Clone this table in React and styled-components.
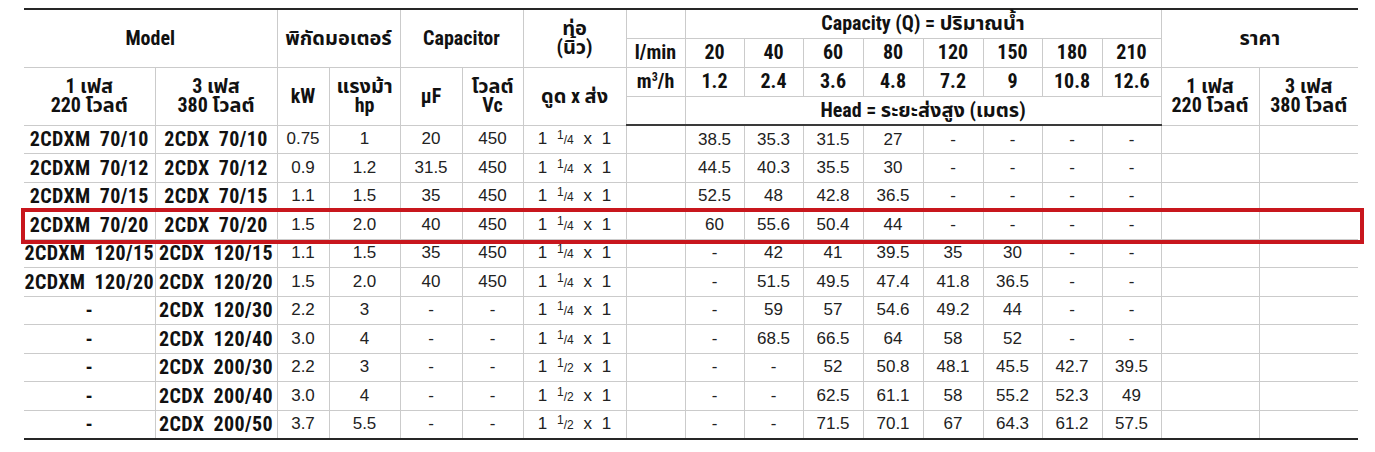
import React from "react"
import styled, { createGlobalStyle } from "styled-components"

const CONDENSED = `"Roboto", "Noto Sans Thai", sans-serif`
const SANS = `"Liberation Sans", Arial, "Noto Sans Thai", sans-serif`
const GRID = "#cbcbcb"

const GlobalStyle = createGlobalStyle`
  body {
    margin: 0;
    background: #fff;
    font-family: ${SANS};
  }
`

const Wrapper = styled.div`
  position: relative;
  padding: 8px 0 0 24px;
`

const Table = styled.table`
  width: 1334px;
  table-layout: fixed;
  border-collapse: collapse;
  color: #1a1a1a;
`

const Col = styled.col`
  width: ${({ $w }) => $w}px;
`

const HeadRow = styled.tr`
  height: 29px;
  &:first-child th {
    border-top: 2px solid #262626;
  }
  &:last-child th {
    border-bottom: 2px solid #3a3a3a;
  }
`

const Th = styled.th`
  font-family: ${CONDENSED};
  font-stretch: 75%;
  font-weight: 700;
  font-size: 20px;
  line-height: 19px;
  color: #111;
  text-align: center;
  white-space: nowrap;
  padding: 0;
  border: 1px solid ${GRID};
  border-left: ${({ $edgeLeft }) => ($edgeLeft ? "none" : `1px solid ${GRID}`)};
  border-right: ${({ $edgeRight }) => ($edgeRight ? "none" : `1px solid ${GRID}`)};
`

const Line = styled.span`
  display: block;
`

const Sup = styled.sup`
  font-size: 12px;
  vertical-align: 7px;
  line-height: 0;
`

const Row = styled.tr`
  height: 28.5px;
  &:last-child td {
    border-bottom: 2px solid #262626;
  }
`

const Td = styled.td`
  font-family: ${SANS};
  font-size: 17px;
  color: #222;
  text-align: center;
  white-space: nowrap;
  padding: 0;
  border: 1px solid ${GRID};
  &:first-child {
    border-left: none;
  }
  &:last-child {
    border-right: none;
  }
`

const ModelCell = styled(Td)`
  font-family: ${CONDENSED};
  font-stretch: 75%;
  font-weight: 700;
  font-size: 20px;
  letter-spacing: 0.4px;
  word-spacing: 4px;
  color: #111;
`

const Pipe = styled.span`
  word-spacing: 5px;
`

const Frac = styled.span`
  font-size: 12px;
  word-spacing: 0;
  sup {
    font-size: 12px;
    vertical-align: 5px;
    line-height: 0;
  }
`

const Highlight = styled.div`
  position: absolute;
  left: 21px;
  top: 208px;
  width: 1343px;
  height: 36px;
  box-sizing: border-box;
  border: 4px solid #c8161d;
  pointer-events: none;
`

const widths = [131, 122, 52, 71, 62, 61, 103, 59, 59, 59, 60, 60, 60, 59, 60, 59, 98, 99]

const rows = [
  ["2CDXM 70/10", "2CDX 70/10", "0.75", "1", "20", "450", "4", ["38.5", "35.3", "31.5", "27", "-", "-", "-", "-"]],
  ["2CDXM 70/12", "2CDX 70/12", "0.9", "1.2", "31.5", "450", "4", ["44.5", "40.3", "35.5", "30", "-", "-", "-", "-"]],
  ["2CDXM 70/15", "2CDX 70/15", "1.1", "1.5", "35", "450", "4", ["52.5", "48", "42.8", "36.5", "-", "-", "-", "-"]],
  ["2CDXM 70/20", "2CDX 70/20", "1.5", "2.0", "40", "450", "4", ["60", "55.6", "50.4", "44", "-", "-", "-", "-"]],
  ["2CDXM 120/15", "2CDX 120/15", "1.1", "1.5", "35", "450", "4", ["-", "42", "41", "39.5", "35", "30", "-", "-"]],
  ["2CDXM 120/20", "2CDX 120/20", "1.5", "2.0", "40", "450", "4", ["-", "51.5", "49.5", "47.4", "41.8", "36.5", "-", "-"]],
  ["-", "2CDX 120/30", "2.2", "3", "-", "-", "4", ["-", "59", "57", "54.6", "49.2", "44", "-", "-"]],
  ["-", "2CDX 120/40", "3.0", "4", "-", "-", "4", ["-", "68.5", "66.5", "64", "58", "52", "-", "-"]],
  ["-", "2CDX 200/30", "2.2", "3", "-", "-", "2", ["-", "-", "52", "50.8", "48.1", "45.5", "42.7", "39.5"]],
  ["-", "2CDX 200/40", "3.0", "4", "-", "-", "2", ["-", "-", "62.5", "61.1", "58", "55.2", "52.3", "49"]],
  ["-", "2CDX 200/50", "3.7", "5.5", "-", "-", "2", ["-", "-", "71.5", "70.1", "67", "64.3", "61.2", "57.5"]],
]

const flows = ["20", "40", "60", "80", "120", "150", "180", "210"]
const cubic = ["1.2", "2.4", "3.6", "4.8", "7.2", "9", "10.8", "12.6"]

const TwoLine = ({ top, bottom }) => (
  <>
    <Line>{top}</Line>
    <Line>{bottom}</Line>
  </>
)

export default function App() {
  return (
    <>
      <GlobalStyle />
      <Wrapper>
        <Table>
          <colgroup>
            {widths.map((w, i) => (
              <Col key={i} $w={w} />
            ))}
          </colgroup>
          <thead>
            <HeadRow>
              <Th colSpan={2} rowSpan={2} $edgeLeft>Model</Th>
              <Th colSpan={2} rowSpan={2}>พิกัดมอเตอร์</Th>
              <Th colSpan={2} rowSpan={2}>Capacitor</Th>
              <Th rowSpan={2}>
                <TwoLine top="ท่อ" bottom="(นิ้ว)" />
              </Th>
              <Th />
              <Th colSpan={8}>Capacity (Q) = ปริมาณน้ำ</Th>
              <Th colSpan={2} rowSpan={2} $edgeRight>ราคา</Th>
            </HeadRow>
            <HeadRow>
              <Th>l/min</Th>
              {flows.map((f) => (
                <Th key={f}>{f}</Th>
              ))}
            </HeadRow>
            <HeadRow>
              <Th rowSpan={2} $edgeLeft>
                <TwoLine top="1 เฟส" bottom="220 โวลต์" />
              </Th>
              <Th rowSpan={2}>
                <TwoLine top="3 เฟส" bottom="380 โวลต์" />
              </Th>
              <Th rowSpan={2}>kW</Th>
              <Th rowSpan={2}>
                <TwoLine top="แรงม้า" bottom="hp" />
              </Th>
              <Th rowSpan={2}>μF</Th>
              <Th rowSpan={2}>
                <TwoLine top="โวลต์" bottom="Vc" />
              </Th>
              <Th rowSpan={2}>ดูด x ส่ง</Th>
              <Th>
                m<Sup>3</Sup>/h
              </Th>
              {cubic.map((c) => (
                <Th key={c}>{c}</Th>
              ))}
              <Th rowSpan={2}>
                <TwoLine top="1 เฟส" bottom="220 โวลต์" />
              </Th>
              <Th rowSpan={2} $edgeRight>
                <TwoLine top="3 เฟส" bottom="380 โวลต์" />
              </Th>
            </HeadRow>
            <HeadRow>
              <Th />
              <Th colSpan={8}>Head = ระยะส่งสูง (เมตร)</Th>
            </HeadRow>
          </thead>
          <tbody>
            {rows.map(([m1, m3, kw, hp, uf, vc, den, heads]) => (
              <Row key={m3}>
                <ModelCell>{m1}</ModelCell>
                <ModelCell>{m3}</ModelCell>
                <Td>{kw}</Td>
                <Td>{hp}</Td>
                <Td>{uf}</Td>
                <Td>{vc}</Td>
                <Td>
                  <Pipe>
                    1{" "}
                    <Frac>
                      <sup>1</sup>/{den}
                    </Frac>{" "}
                    x 1
                  </Pipe>
                </Td>
                <Td />
                {heads.map((h, i) => (
                  <Td key={i}>{h}</Td>
                ))}
                <Td />
                <Td />
              </Row>
            ))}
          </tbody>
        </Table>
        <Highlight />
      </Wrapper>
    </>
  )
}
